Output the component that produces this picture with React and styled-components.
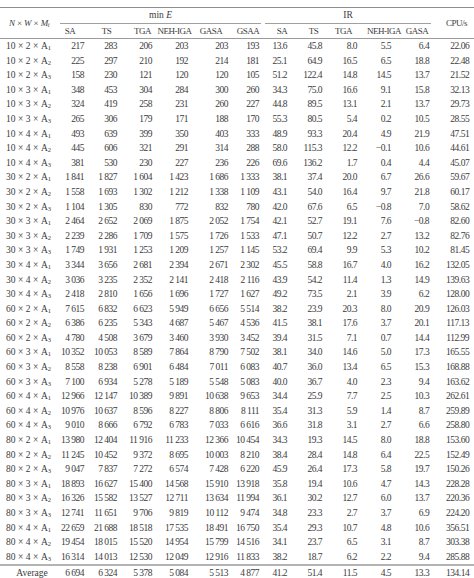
import React from 'react';
import styled, { createGlobalStyle } from 'styled-components';

const GlobalStyle = createGlobalStyle`
  html, body {
    margin: 0;
    padding: 0;
    background: #fff;
  }
  body {
    font-family: "Liberation Serif", "Times New Roman", serif;
    color: #3b3b3b;
  }
`;

// column widths, right padding of the figures, and header nudge
const cols = [
  { w: 58 },
  { w: 30, pr: 4, name: 'SA', nudge: -3 },
  { w: 33, pr: 4, name: 'TS', nudge: 2 },
  { w: 35, pr: 4, name: 'TGA', nudge: 4 },
  { w: 37, pr: 5, name: 'NEH-IGA', nudge: 0 },
  { w: 40, pr: 5, name: 'GASA', nudge: -2 },
  { w: 30, pr: 4, name: 'GSAA', nudge: 0 },
  { w: 28, pr: 4, name: 'SA', nudge: 5 },
  { w: 35, pr: 4, name: 'TS', nudge: 5 },
  { w: 35, pr: 4, name: 'TGA', nudge: 0 },
  { w: 34, pr: 4, name: 'NEH-IGA', nudge: 3 },
  { w: 38, pr: 4, name: 'GASA', nudge: 3 },
  { w: 41, pr: 5 },
];

const rows = [
  ['10 2 1', '217', '283', '206', '203', '203', '193', '13.6', '45.8', '8.0', '5.5', '6.4', '22.06'],
  ['10 2 2', '225', '297', '210', '192', '214', '181', '25.1', '64.9', '16.5', '6.5', '18.8', '22.48'],
  ['10 2 3', '158', '230', '121', '120', '120', '105', '51.2', '122.4', '14.8', '14.5', '13.7', '21.52'],
  ['10 3 1', '348', '453', '304', '284', '300', '260', '34.3', '75.0', '16.6', '9.1', '15.8', '32.13'],
  ['10 3 2', '324', '419', '258', '231', '260', '227', '44.8', '89.5', '13.1', '2.1', '13.7', '29.73'],
  ['10 3 3', '265', '306', '179', '171', '188', '170', '55.3', '80.5', '5.4', '0.2', '10.5', '28.55'],
  ['10 4 1', '493', '639', '399', '350', '403', '333', '48.9', '93.3', '20.4', '4.9', '21.9', '47.51'],
  ['10 4 2', '445', '606', '321', '291', '314', '288', '58.0', '115.3', '12.2', '−0.1', '10.6', '44.61'],
  ['10 4 3', '381', '530', '230', '227', '236', '226', '69.6', '136.2', '1.7', '0.4', '4.4', '45.07'],
  ['30 2 1', '1 841', '1 827', '1 604', '1 423', '1 686', '1 333', '38.1', '37.4', '20.0', '6.7', '26.6', '59.67'],
  ['30 2 2', '1 558', '1 693', '1 302', '1 212', '1 338', '1 109', '43.1', '54.0', '16.4', '9.7', '21.8', '60.17'],
  ['30 2 3', '1 104', '1 305', '830', '772', '832', '780', '42.0', '67.6', '6.5', '−0.8', '7.0', '58.62'],
  ['30 3 1', '2 464', '2 652', '2 069', '1 875', '2 052', '1 754', '42.1', '52.7', '19.1', '7.6', '−0.8', '82.60'],
  ['30 3 2', '2 239', '2 286', '1 709', '1 575', '1 726', '1 533', '47.1', '50.7', '12.2', '2.7', '13.2', '82.76'],
  ['30 3 3', '1 749', '1 931', '1 253', '1 209', '1 257', '1 145', '53.2', '69.4', '9.9', '5.3', '10.2', '81.45'],
  ['30 4 1', '3 344', '3 656', '2 681', '2 394', '2 671', '2 302', '45.5', '58.8', '16.7', '4.0', '16.2', '132.05'],
  ['30 4 2', '3 036', '3 235', '2 352', '2 141', '2 418', '2 116', '43.9', '54.2', '11.4', '1.3', '14.9', '139.63'],
  ['30 4 3', '2 418', '2 810', '1 656', '1 696', '1 727', '1 627', '49.2', '73.5', '2.1', '3.9', '6.2', '128.00'],
  ['60 2 1', '7 615', '6 832', '6 623', '5 949', '6 656', '5 514', '38.2', '23.9', '20.3', '8.0', '20.9', '126.03'],
  ['60 2 2', '6 386', '6 235', '5 343', '4 687', '5 467', '4 536', '41.5', '38.1', '17.6', '3.7', '20.1', '117.13'],
  ['60 2 3', '4 780', '4 508', '3 679', '3 460', '3 930', '3 452', '39.4', '31.5', '7.1', '0.7', '14.4', '112.99'],
  ['60 3 1', '10 352', '10 053', '8 589', '7 864', '8 790', '7 502', '38.1', '34.0', '14.6', '5.0', '17.3', '165.55'],
  ['60 3 2', '8 558', '8 238', '6 901', '6 484', '7 011', '6 083', '40.7', '36.0', '13.4', '6.5', '15.3', '168.88'],
  ['60 3 3', '7 100', '6 934', '5 278', '5 189', '5 548', '5 083', '40.0', '36.7', '4.0', '2.3', '9.4', '163.62'],
  ['60 4 1', '12 966', '12 147', '10 389', '9 891', '10 638', '9 653', '34.4', '25.9', '7.7', '2.5', '10.3', '262.61'],
  ['60 4 2', '10 976', '10 637', '8 596', '8 227', '8 806', '8 111', '35.4', '31.3', '5.9', '1.4', '8.7', '259.89'],
  ['60 4 3', '9 010', '8 666', '6 792', '6 783', '7 033', '6 616', '36.6', '31.8', '3.1', '2.7', '6.6', '258.80'],
  ['80 2 1', '13 980', '12 404', '11 916', '11 233', '12 366', '10 454', '34.3', '19.3', '14.5', '8.0', '18.8', '153.60'],
  ['80 2 2', '11 245', '10 452', '9 372', '8 695', '10 003', '8 210', '38.4', '28.4', '14.8', '6.4', '22.5', '152.49'],
  ['80 2 3', '9 047', '7 837', '7 272', '6 574', '7 428', '6 220', '45.9', '26.4', '17.3', '5.8', '19.7', '150.26'],
  ['80 3 1', '18 893', '16 627', '15 400', '14 568', '15 910', '13 918', '35.8', '19.4', '10.6', '4.7', '14.3', '228.28'],
  ['80 3 2', '16 326', '15 582', '13 527', '12 711', '13 634', '11 994', '36.1', '30.2', '12.7', '6.0', '13.7', '220.36'],
  ['80 3 3', '12 741', '11 651', '9 706', '9 819', '10 112', '9 474', '34.8', '23.3', '2.7', '3.7', '6.9', '224.20'],
  ['80 4 1', '22 659', '21 688', '18 518', '17 535', '18 491', '16 750', '35.4', '29.3', '10.7', '4.8', '10.6', '356.51'],
  ['80 4 2', '19 454', '18 015', '15 520', '14 954', '15 799', '14 516', '34.1', '23.7', '6.5', '3.1', '8.7', '303.38'],
  ['80 4 3', '16 314', '14 013', '12 530', '12 049', '12 916', '11 833', '38.2', '18.7', '6.2', '2.2', '9.4', '285.88'],
];

const average = ['6 694', '6 324', '5 378', '5 084', '5 513', '4 877', '41.2', '51.4', '11.5', '4.5', '13.3', '134.14'];

const Table = styled.table`
  width: 474px;
  margin-top: 7px;
  border-collapse: collapse;
  table-layout: fixed;
  font-size: 9.5px;
`;

const HeadCell = styled.th`
  font-weight: normal;
  font-size: 9px;
  padding: 0 ${p => Math.max(0, -p.$nudge * 2 || 0)}px 0 ${p => Math.max(0, p.$nudge * 2 || 0)}px;
  text-align: center;
  white-space: nowrap;
  letter-spacing: -0.5px;
  height: ${p => p.$h}px;
  border-top: ${p => (p.$top ? '1.5px solid #8e8e8e' : 'none')};
  border-bottom: ${p => (p.$rule ? '1px solid #9c9c9c' : 'none')};
`;

const GroupCell = styled(HeadCell)`
  padding: 0 2px;
  font-size: 9.5px;
  letter-spacing: 0;
`;

const GroupRule = styled.div`
  border-bottom: 1px solid #a0a0a0;
  line-height: 15px;
`;

const LabelCell = styled.td`
  padding: 0 0 0 6px;
  font-size: 9.5px;
  text-align: ${p => (p.$center ? 'center' : 'left')};
  white-space: nowrap;
  height: 14.6px;
  line-height: 14.6px;
  border-top: ${p => (p.$rule ? '2px solid #b4b4b4' : 'none')};
`;

const NumCell = styled.td`
  padding: 0 ${p => p.$pr}px 0 0;
  text-align: right;
  white-space: nowrap;
  letter-spacing: -0.5px;
  height: 14.6px;
  line-height: 14.6px;
  border-top: ${p => (p.$rule ? '2px solid #b4b4b4' : 'none')};
`;

const Times = styled.span`
  margin: 0 2.5px;
`;

const Sub = styled.sub`
  font-size: 6.5px;
  vertical-align: -1px;
  line-height: 0;
`;

const It = styled.i`
  font-style: italic;
`;

const Label = ({ code }) => {
  const [n, w, a] = code.split(' ');
  return (
    <>
      {n}<Times>×</Times>{w}<Times>×</Times>A<Sub>{a}</Sub>
    </>
  );
};

const DataRow = ({ row }) => (
  <tr>
    <LabelCell><Label code={row[0]} /></LabelCell>
    {row.slice(1).map((v, i) => (
      <NumCell key={i} $pr={cols[i + 1].pr}>{v}</NumCell>
    ))}
  </tr>
);

export default function App() {
  return (
    <>
      <GlobalStyle />
      <Table>
        <colgroup>
          {cols.map((c, i) => <col key={i} style={{ width: c.w }} />)}
        </colgroup>
        <thead>
          <tr>
            <HeadCell rowSpan={2} $h={30} $top $rule $nudge={0}>
              <It>N</It><Times>×</Times><It>W</It><Times>×</Times><It>M</It><Sub><It>i</It></Sub>
            </HeadCell>
            <GroupCell colSpan={6} $h={16} $top>
              <GroupRule>min <It>E</It></GroupRule>
            </GroupCell>
            <GroupCell colSpan={5} $h={16} $top>
              <GroupRule>IR</GroupRule>
            </GroupCell>
            <HeadCell rowSpan={2} $h={30} $top $rule $nudge={3}>CPU/s</HeadCell>
          </tr>
          <tr>
            {cols.slice(1, 12).map((c, i) => (
              <HeadCell key={i} $h={14} $rule $nudge={c.nudge}>{c.name}</HeadCell>
            ))}
          </tr>
        </thead>
        <tbody>
          {rows.map(r => <DataRow key={r[0]} row={r} />)}
          <tr>
            <LabelCell $center $rule>Average</LabelCell>
            {average.map((v, i) => (
              <NumCell key={i} $rule $pr={cols[i + 1].pr}>{v}</NumCell>
            ))}
          </tr>
        </tbody>
      </Table>
    </>
  );
}
